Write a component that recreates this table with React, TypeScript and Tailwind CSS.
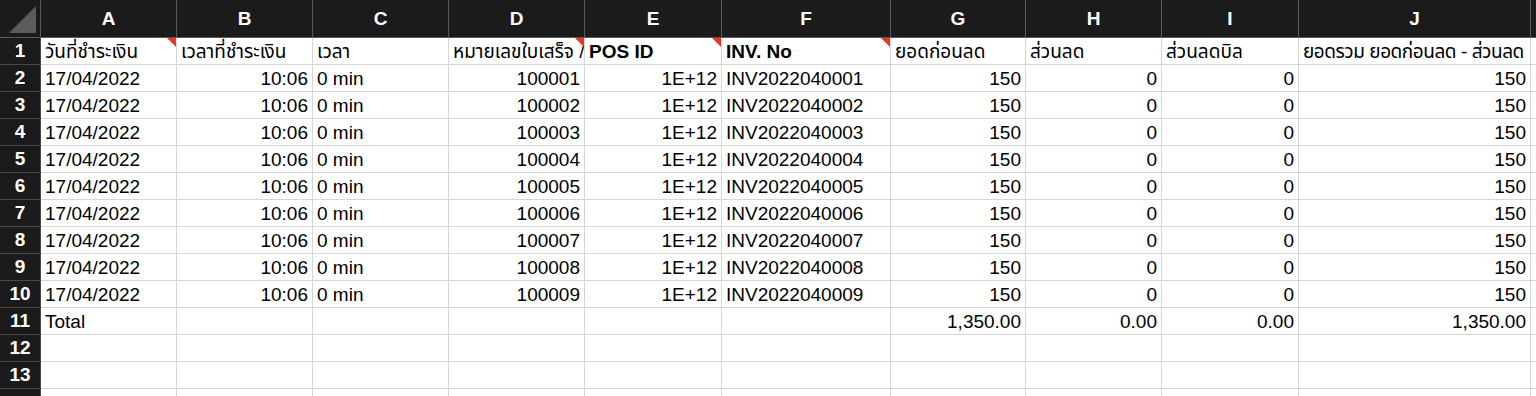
import React from "react";

type Align = "left" | "right";

interface Column {
  letter: string;
  width: string;
  align: Align;
}

const columns: Column[] = [
  { letter: "A", width: "w-[136px]", align: "left" },
  { letter: "B", width: "w-[136px]", align: "right" },
  { letter: "C", width: "w-[136px]", align: "left" },
  { letter: "D", width: "w-[136px]", align: "right" },
  { letter: "E", width: "w-[137px]", align: "right" },
  { letter: "F", width: "w-[169px]", align: "left" },
  { letter: "G", width: "w-[135px]", align: "right" },
  { letter: "H", width: "w-[136px]", align: "right" },
  { letter: "I", width: "w-[137px]", align: "right" },
  { letter: "J", width: "w-[232px]", align: "right" },
];

interface HeadCell {
  text: string;
  bold?: boolean;
  note?: boolean;
  tight?: boolean;
}

const titles: HeadCell[] = [
  { text: "วันที่ชำระเงิน", note: true },
  { text: "เวลาที่ชำระเงิน" },
  { text: "เวลา" },
  { text: "หมายเลขใบเสร็จ / POS", note: true },
  { text: "POS ID", bold: true, note: true },
  { text: "INV. No", bold: true, note: true },
  { text: "ยอดก่อนลด" },
  { text: "ส่วนลด" },
  { text: "ส่วนลดบิล" },
  { text: "ยอดรวม ยอดก่อนลด - ส่วนลด", tight: true },
];

const dataRows: string[][] = Array.from({ length: 9 }).map((_, i) => [
  "17/04/2022",
  "10:06",
  "0 min",
  `10000${i + 1}`,
  "1E+12",
  `INV202204000${i + 1}`,
  "150",
  "0",
  "0",
  "150",
]);

const totalRow = ["Total", "", "", "", "", "", "1,350.00", "0.00", "0.00", "1,350.00"];

const font = "font-['Liberation_Sans','Noto_Sans','Noto_Sans_Thai',Arial,sans-serif]";

const RowNumber = ({ n }: { n?: number }) => (
  <div className="flex h-full w-[41px] shrink-0 items-center justify-center border-r border-b border-[#4a4a4a] bg-[#1b1b1b] pt-[1px] text-[19px] font-bold text-white">
    {n}
  </div>
);

const SheetRow = ({ n, cells, heads }: { n?: number; cells?: string[]; heads?: HeadCell[] }) => (
  <div className="flex h-[27px] shrink-0">
    <RowNumber n={n} />
    {columns.map((col, i) => {
      const head = heads?.[i];
      const text = head ? head.text : (cells?.[i] ?? "");
      const align = head ? "justify-start" : col.align === "right" ? "justify-end" : "justify-start";
      return (
        <div
          key={col.letter}
          className={`relative flex h-full shrink-0 items-center overflow-hidden whitespace-nowrap border-r border-b border-[#d6d6d6] px-[4px] pt-[1px] text-[19px] leading-none text-black ${col.width} ${align} ${head?.bold ? "font-bold" : ""} ${head?.tight ? "tracking-[-0.45px]" : ""}`}
        >
          {text}
          {head?.note ? (
            <span className="absolute top-0 right-0 h-0 w-0 border-t-[9px] border-l-[9px] border-t-[#ee3524] border-l-transparent" />
          ) : null}
        </div>
      );
    })}
    <div className="h-full flex-1 border-b border-[#d6d6d6]" />
  </div>
);

export default function App() {
  return (
    <div className={`flex h-[396px] w-[1536px] flex-col overflow-hidden bg-white ${font}`}>
      <div className="flex h-[38px] shrink-0 bg-[#1b1b1b]">
        <div className="relative w-[41px] shrink-0 border-r border-b border-[#5a5a5a]">
          <span className="absolute right-[4px] bottom-[4px] h-0 w-0 border-b-[27px] border-l-[27px] border-b-[#5c5c5c] border-l-transparent" />
        </div>
        {columns.map((col) => (
          <div
            key={col.letter}
            className={`flex h-full shrink-0 items-center justify-center border-r border-b border-[#5a5a5a] pt-[1px] text-[19px] font-bold text-white ${col.width}`}
          >
            {col.letter}
          </div>
        ))}
        <div className="h-full flex-1 border-b border-[#5a5a5a]" />
      </div>
      <SheetRow n={1} heads={titles} />
      {dataRows.map((cells, i) => (
        <SheetRow key={i} n={i + 2} cells={cells} />
      ))}
      <SheetRow n={11} cells={totalRow} />
      <SheetRow n={12} />
      <SheetRow n={13} />
      <SheetRow />
    </div>
  );
}
